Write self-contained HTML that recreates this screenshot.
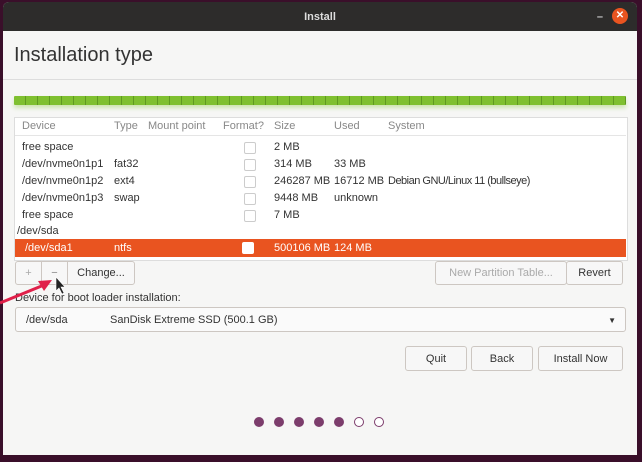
<!DOCTYPE html><html><head><style>
body{margin:0;width:642px;height:462px;background:#3a0f2a;font-family:"Liberation Sans",sans-serif;position:relative;overflow:hidden;font-size:11px;color:#333}
.win{position:absolute;left:3px;top:2px;width:634px;height:453px;background:#f6f6f5;border-radius:6px 6px 0 0;overflow:hidden}
.tb{height:29px;background:#2d2c2b;color:#ddd;text-align:center;line-height:30px;font-weight:bold;font-size:11px;position:relative}
.x{position:absolute;right:9px;top:6px;width:16px;height:16px;border-radius:50%;background:#e95420;color:#fff;font-size:10px;line-height:16px}
.min{position:absolute;right:34px;top:0;color:#ccc}
.a{position:absolute}
.btn{position:absolute;border:1px solid #cdc7c2;background:#f7f7f7;border-radius:3px;text-align:center;box-sizing:border-box;color:#333}
.row{position:absolute;left:19px;height:17px;line-height:19px;width:600px}
.row span{position:absolute}
.cb{position:absolute;left:222px;top:4px;width:10px;height:10px;border:1px solid #ccc;border-radius:2px;background:#fff}
.dot{position:absolute;top:415px;width:10px;height:10px;border-radius:50%;background:#7c3d6c}
.dot.o{background:#fff;border:1px solid #7c3d6c;box-sizing:border-box}
</style></head><body>
<div class="win">
<div class="tb">Install<span class="min">–</span><div class="x">✕</div></div>
<div class="a" style="left:11px;top:42px;font-size:20px;color:#333">Installation type</div>
<div class="a" style="left:0;top:77px;width:634px;height:1px;background:#ddd"></div>
<div class="a" style="left:11px;top:94px;width:612px;height:9px;background:repeating-linear-gradient(90deg,#7fc030 0 11px,#5f9a20 11px 12px);border-radius:1px;box-shadow:0 3px 4px #cde5b0"></div>
<div class="a" style="left:11px;top:115px;width:612px;height:142px;background:#fff;border:1px solid #ddd"></div>
<div class="row" style="top:115px;color:#888"><span style="left:0">Device</span><span style="left:92px">Type</span><span style="left:126px">Mount point</span><span style="left:201px">Format?</span><span style="left:252px">Size</span><span style="left:312px">Used</span><span style="left:366px">System</span></div>
<div class="a" style="left:12px;top:133px;width:611px;height:1px;background:#e5e5e5"></div>
<div class="row" style="top:136px"><span style="left:0">free space</span><i class="cb"></i><span style="left:252px">2 MB</span></div>
<div class="row" style="top:153px"><span style="left:0">/dev/nvme0n1p1</span><span style="left:92px">fat32</span><i class="cb"></i><span style="left:252px">314 MB</span><span style="left:312px">33 MB</span></div>
<div class="row" style="top:170px"><span style="left:0">/dev/nvme0n1p2</span><span style="left:92px">ext4</span><i class="cb"></i><span style="left:252px">246287 MB</span><span style="left:312px">16712 MB</span><span style="left:366px;letter-spacing:-0.5px">Debian GNU/Linux 11 (bullseye)</span></div>
<div class="row" style="top:187px"><span style="left:0">/dev/nvme0n1p3</span><span style="left:92px">swap</span><i class="cb"></i><span style="left:252px">9448 MB</span><span style="left:312px">unknown</span></div>
<div class="row" style="top:204px"><span style="left:0">free space</span><i class="cb"></i><span style="left:252px">7 MB</span></div>
<div class="row" style="top:220px;left:14px"><span style="left:0">/dev/sda</span></div>
<div class="a" style="left:12px;top:237px;width:611px;height:18px;background:#e95420"></div>
<div class="row" style="top:237px;color:#fff"><span style="left:3px">/dev/sda1</span><span style="left:92px">ntfs</span><i class="cb" style="left:220px;top:3px;border-color:#fff"></i><span style="left:252px">500106 MB</span><span style="left:312px">124 MB</span></div>
<div class="btn" style="left:12px;top:259px;width:27px;height:24px;line-height:22px;color:#aaa;border-radius:3px 0 0 3px">+</div>
<div class="btn" style="left:38px;top:259px;width:27px;height:24px;line-height:22px;color:#888;border-radius:0">−</div>
<div class="btn" style="left:64px;top:259px;width:68px;height:24px;line-height:22px;border-radius:0 3px 3px 0">Change...</div>
<div class="btn" style="left:432px;top:259px;width:132px;height:24px;line-height:22px;color:#aaa">New Partition Table...</div>
<div class="btn" style="left:563px;top:259px;width:57px;height:24px;line-height:22px">Revert</div>
<div class="a" style="left:12px;top:290px">Device for boot loader installation:</div>
<div class="btn" style="left:12px;top:305px;width:611px;height:25px;line-height:25px;text-align:left;background:#fafafa"><span style="position:absolute;left:10px">/dev/sda</span><span style="position:absolute;left:94px">SanDisk Extreme SSD (500.1 GB)</span><span style="position:absolute;right:9px;font-size:8px">▼</span></div>
<div class="btn" style="left:402px;top:344px;width:62px;height:25px;line-height:25px">Quit</div>
<div class="btn" style="left:468px;top:344px;width:62px;height:25px;line-height:25px">Back</div>
<div class="btn" style="left:535px;top:344px;width:85px;height:25px;line-height:25px">Install Now</div>
<div class="dot" style="left:251px"></div><div class="dot" style="left:271px"></div><div class="dot" style="left:291px"></div><div class="dot" style="left:311px"></div><div class="dot" style="left:331px"></div><div class="dot o" style="left:351px"></div><div class="dot o" style="left:371px"></div>
</div>
<svg class="a" style="left:0;top:265px" width="70" height="50"><path d="M0 38 L44 20" stroke="#e0204a" stroke-width="3"/><path d="M52 15 L38 16 L44 26 Z" fill="#e0204a"/><path d="M56 12 L56 26 L59 23 L62 29 L64 28 L61 22 L65 22 Z" fill="#222" stroke="#fff" stroke-width=".6"/></svg>
</body></html>
